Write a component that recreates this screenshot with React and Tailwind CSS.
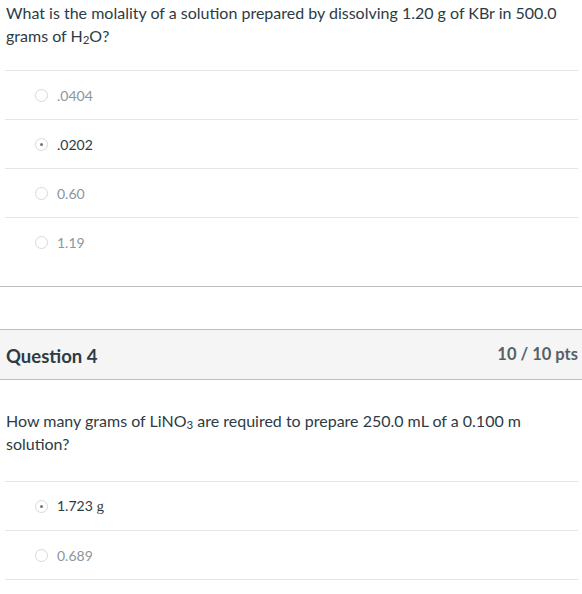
import React from 'react';

const Radio = ({ checked }) => (
  <span className="relative flex h-[13px] w-[13px] shrink-0 items-center justify-center rounded-full border border-[#d5d9dc] bg-white">
    {checked && <span className="h-[3px] w-[3px] rounded-full bg-[#6b7780]" />}
  </span>
);

const Option = ({ label, checked }) => (
  <div className="flex h-[49px] items-center gap-[9px] border-t border-[#e3e6e8] pl-[30px]">
    <Radio checked={checked} />
    <span className={`text-[14px] ${checked ? 'text-[#2d3b45]' : 'text-[#8b969e]'}`}>{label}</span>
  </div>
);

const Sub = ({ children }) => (
  <span className="relative top-[2px] text-[11.5px] leading-none">{children}</span>
);

export default function App() {
  return (
    <div className="w-[582px] bg-white pt-[1px] font-['Lato','Liberation_Sans',sans-serif] text-[#2d3b45]">
      <div className="ml-[6px] mr-[4px] text-[16px] leading-[23px]">
        What is the molality of a solution prepared by dissolving 1.20 g of KBr in 500.0 grams of H<Sub>2</Sub>O?
      </div>
      <div className="ml-[5px] mr-[4px] mt-[23px]">
        <Option label=".0404" />
        <Option label=".0202" checked />
        <Option label="0.60" />
        <Option label="1.19" />
      </div>

      <div className="mt-[20px] border-t border-[#b8bec2]" />

      <div className="mt-[42px] flex h-[51px] items-center justify-between border-y border-[#b8bec2] bg-[#f5f5f5] pl-[6px] pr-[4px]">
        <span className="pt-[5px] text-[18.5px] font-bold">Question 4</span>
        <span className="text-[16.5px] font-bold text-[#555f66]">10 / 10 pts</span>
      </div>

      <div className="ml-[6px] mr-[4px] mt-[29px] text-[16px] leading-[23px]">
        How many grams of LiNO<Sub>3</Sub> are required to prepare 250.0 mL of a 0.100 m solution?
      </div>
      <div className="ml-[5px] mr-[4px] mt-[26px] border-b border-[#e3e6e8]">
        <Option
          label={<>1.723 <span className="font-['Liberation_Serif',serif] text-[15px]">g</span></>}
          checked
        />
        <Option label="0.689" />
      </div>
      <div className="h-[14px]" />
    </div>
  );
}
